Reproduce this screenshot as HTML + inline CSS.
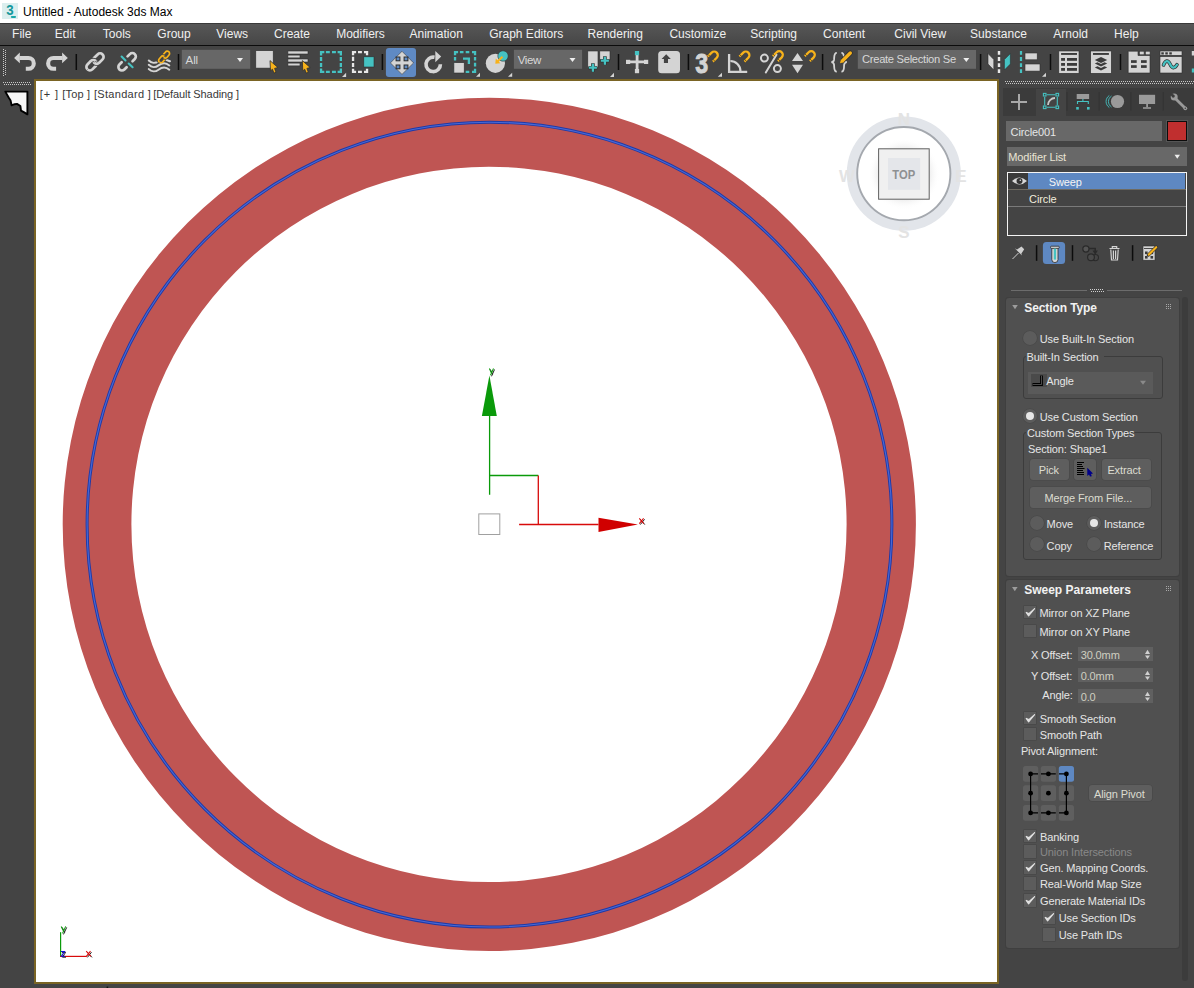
<!DOCTYPE html>
<html><head><meta charset="utf-8">
<style>
*{box-sizing:border-box}
html,body{margin:0;padding:0}
body{width:1194px;height:988px;position:relative;overflow:hidden;background:#444;font-family:"Liberation Sans",sans-serif;}
.a{position:absolute}
.t{position:absolute;white-space:pre;line-height:14px;color:#e6e6e6;font-size:11px}
.m{position:absolute;white-space:pre;line-height:14px;color:#f0f0f0;font-size:12px;top:27px}
</style></head>
<body>
<div class="a" style="left:0;top:0;width:1194px;height:23px;background:#fff"></div>
<div class="a" style="left:0;top:23px;width:1194px;height:1px;background:#3a3a3a"></div>
<svg class="a" style="left:2px;top:3px" width="16" height="16" viewBox="0 0 16 16"><rect x="0" y="0" width="16" height="16" fill="#dbeeee"/><text x="4.3" y="12.1" font-family="Liberation Sans" font-weight="bold" font-size="14.5" fill="#15989c" transform="translate(4.3,0) scale(0.92,1) translate(-4.3,0)">3</text><rect x="8.9" y="12.9" width="5.1" height="2" rx="0.8" fill="#1aa8a8"/></svg>
<div class="t" style="left:23px;top:5px;font-size:12px;color:#000">Untitled - Autodesk 3ds Max</div>
<div class="a" style="left:0;top:24px;width:1194px;height:21px;background:linear-gradient(#575757,#464646)"></div>
<div class="a" style="left:0;top:45px;width:1194px;height:1px;background:#0c0c0c"></div>
<div class="m" style="left:12.1px">File</div>
<div class="m" style="left:54.8px">Edit</div>
<div class="m" style="left:102.8px">Tools</div>
<div class="m" style="left:157.3px">Group</div>
<div class="m" style="left:216.3px">Views</div>
<div class="m" style="left:274.0px">Create</div>
<div class="m" style="left:336.2px">Modifiers</div>
<div class="m" style="left:409.5px">Animation</div>
<div class="m" style="left:489.2px">Graph Editors</div>
<div class="m" style="left:587.6px">Rendering</div>
<div class="m" style="left:669.4px">Customize</div>
<div class="m" style="left:750.3px">Scripting</div>
<div class="m" style="left:823.1px">Content</div>
<div class="m" style="left:894.3px">Civil View</div>
<div class="m" style="left:970.1px">Substance</div>
<div class="m" style="left:1053.3px">Arnold</div>
<div class="m" style="left:1114.1px">Help</div>
<svg class="a" style="left:0;top:0" width="1194" height="80" viewBox="0 0 1194 80"><g fill="#c8c8c8"><rect x="3" y="49" width="1" height="1"/><rect x="3" y="51" width="1" height="1"/><rect x="3" y="53" width="1" height="1"/><rect x="3" y="55" width="1" height="1"/><rect x="3" y="57" width="1" height="1"/><rect x="3" y="59" width="1" height="1"/><rect x="3" y="61" width="1" height="1"/><rect x="3" y="63" width="1" height="1"/><rect x="3" y="65" width="1" height="1"/><rect x="3" y="67" width="1" height="1"/><rect x="3" y="69" width="1" height="1"/><rect x="3" y="71" width="1" height="1"/><rect x="3" y="73" width="1" height="1"/><rect x="3" y="75" width="1" height="1"/><rect x="5" y="50" width="1" height="1"/><rect x="5" y="52" width="1" height="1"/><rect x="5" y="54" width="1" height="1"/><rect x="5" y="56" width="1" height="1"/><rect x="5" y="58" width="1" height="1"/><rect x="5" y="60" width="1" height="1"/><rect x="5" y="62" width="1" height="1"/><rect x="5" y="64" width="1" height="1"/><rect x="5" y="66" width="1" height="1"/><rect x="5" y="68" width="1" height="1"/><rect x="5" y="70" width="1" height="1"/><rect x="5" y="72" width="1" height="1"/><rect x="5" y="74" width="1" height="1"/></g><path d="M19.5,58 H28.4 A5.35 5.35 0 0 1 28.4,68.75 H25.8" fill="none" stroke="#d4d4d4" stroke-width="4.1"/><polygon points="14.1,57.9 19.8,52.6 19.8,63.2" fill="#d4d4d4"/><g transform="translate(81.9,0) scale(-1,1)"><path d="M19.5,58 H28.4 A5.35 5.35 0 0 1 28.4,68.75 H25.8" fill="none" stroke="#d4d4d4" stroke-width="4.1"/><polygon points="14.1,57.9 19.8,52.6 19.8,63.2" fill="#d4d4d4"/></g><rect x="75.55" y="54" width="1.5" height="16" fill="#0c0c0c"/><path d="M-5.9,0 A3.5 3.5 0 0 0 -2.4,3.5 H2.4 A3.5 3.5 0 0 0 5.9,0" transform="translate(91.6,65.2) rotate(-45)" fill="none" stroke="#d4d4d4" stroke-width="2.7"/><path d="M-2.4,-3.5 H2.4 A3.5 3.5 0 0 1 2.4,3.5 H-2.4 A3.5 3.5 0 0 1 -2.4,-3.5 Z" transform="translate(98.4,58.6) rotate(-45)" fill="none" stroke="#444" stroke-width="4.300000000000001"/><path d="M-2.4,-3.5 H2.4 A3.5 3.5 0 0 1 2.4,3.5 H-2.4 A3.5 3.5 0 0 1 -2.4,-3.5 Z" transform="translate(98.4,58.6) rotate(-45)" fill="none" stroke="#d4d4d4" stroke-width="2.7"/><path d="M-5.9,0 A3.5 3.5 0 0 1 -2.4,-3.5 H2.4 A3.5 3.5 0 0 1 5.9,0" transform="translate(91.6,65.2) rotate(-45)" fill="none" stroke="#444" stroke-width="4.300000000000001"/><path d="M-5.9,0 A3.5 3.5 0 0 1 -2.4,-3.5 H2.4 A3.5 3.5 0 0 1 5.9,0" transform="translate(91.6,65.2) rotate(-45)" fill="none" stroke="#d4d4d4" stroke-width="2.7"/><path d="M1.2,-3.5 H-2.0 A3.5 3.5 0 0 0 -2.0,3.5 H1.2" transform="translate(123.3,65.6) rotate(-45)" fill="none" stroke="#d4d4d4" stroke-width="2.7" stroke-linecap="round"/><path d="M-1.2,3.5 H2.0 A3.5 3.5 0 0 0 2.0,-3.5 H-1.2" transform="translate(130.9,58.0) rotate(-45)" fill="none" stroke="#d4d4d4" stroke-width="2.7" stroke-linecap="round"/><path d="M121.6,56.5 L125.5,60.4 M128.7,63.5 L132.6,67.2" stroke="#45c2c2" stroke-width="2.1" stroke-linecap="round"/><path d="M148.8,69.1 C151.5,72.0 155.5,72.0 158.5,69.69999999999999 S165.5,66.3 169.3,69.69999999999999" fill="none" stroke="#d4d4d4" stroke-width="2" stroke-linecap="round"/><path d="M148.8,64.8 C151.5,67.7 155.5,67.7 158.5,65.39999999999999 S165.5,62.0 169.3,65.39999999999999" fill="none" stroke="#d4d4d4" stroke-width="2" stroke-linecap="round"/><path d="M148.8,60.5 C151.5,63.4 155.5,63.4 158.5,61.1 S165.5,57.7 169.3,61.1" fill="none" stroke="#d4d4d4" stroke-width="2" stroke-linecap="round"/><rect x="156" y="49" width="15" height="12.5" fill="#444" transform="rotate(0)"/><path d="M166.5,60 L170,61.2" stroke="#d4d4d4" stroke-width="2" stroke-linecap="round"/><path d="M-3.8,0 A2.3 2.3 0 0 0 -1.5,2.3 H1.5 A2.3 2.3 0 0 0 3.8,0" transform="translate(161.9,59.3) rotate(-50)" fill="none" stroke="#f7b21b" stroke-width="1.7"/><path d="M-1.5,-2.3 H1.5 A2.3 2.3 0 0 1 1.5,2.3 H-1.5 A2.3 2.3 0 0 1 -1.5,-2.3 Z" transform="translate(166.3,54.6) rotate(-50)" fill="none" stroke="#444" stroke-width="3.3"/><path d="M-1.5,-2.3 H1.5 A2.3 2.3 0 0 1 1.5,2.3 H-1.5 A2.3 2.3 0 0 1 -1.5,-2.3 Z" transform="translate(166.3,54.6) rotate(-50)" fill="none" stroke="#f7b21b" stroke-width="1.7"/><path d="M-3.8,0 A2.3 2.3 0 0 1 -1.5,-2.3 H1.5 A2.3 2.3 0 0 1 3.8,0" transform="translate(161.9,59.3) rotate(-50)" fill="none" stroke="#444" stroke-width="3.3"/><path d="M-3.8,0 A2.3 2.3 0 0 1 -1.5,-2.3 H1.5 A2.3 2.3 0 0 1 3.8,0" transform="translate(161.9,59.3) rotate(-50)" fill="none" stroke="#f7b21b" stroke-width="1.7"/><rect x="177.75" y="54" width="1.5" height="16" fill="#0c0c0c"/><rect x="181.8" y="49.8" width="68.4" height="19" fill="#676767"/><polygon points="237,58 243,58 240,62" fill="#eee"/><rect x="255.8" y="50.7" width="17.4" height="17.4" fill="#d4d4d4" stroke="#2e2e2e" stroke-width="0.6"/><polygon points="270.0,60.6 270.5,70.9 272.4,69.2 274.0,73.1 276.0,72.3 274.6,68.4 277.9,67.5" fill="#f7b21b" stroke="#2e2e2e" stroke-width="0.8" stroke-linejoin="round"/><rect x="287.9" y="51" width="20.100000000000023" height="3" fill="#d4d4d4" stroke="#2e2e2e" stroke-width="0.6"/><rect x="287.9" y="55.1" width="12.100000000000023" height="2.799999999999997" fill="#d4d4d4" stroke="#2e2e2e" stroke-width="0.6"/><rect x="287.9" y="59" width="20.100000000000023" height="3" fill="#d4d4d4" stroke="#2e2e2e" stroke-width="0.6"/><rect x="287.9" y="63.1" width="12.100000000000023" height="2.8000000000000043" fill="#d4d4d4" stroke="#2e2e2e" stroke-width="0.6"/><polygon points="302.3,60.6 302.8,70.9 304.7,69.2 306.3,73.1 308.3,72.3 306.9,68.4 310.2,67.5" fill="#f7b21b" stroke="#2e2e2e" stroke-width="0.8" stroke-linejoin="round"/><path d="M321.04999999999995,55.4 V52.15 H324.29999999999995 M337.6,52.15 H340.85 V55.4 M340.85,68.6 V71.85 H337.6 M324.29999999999995,71.85 H321.04999999999995 V68.6 M325.9,52.15 H329.79999999999995 M325.9,71.85 H329.79999999999995 M332.0,52.15 H335.9 M332.0,71.85 H335.9 M321.04999999999995,57.0 V60.9 M340.85,57.0 V60.9 M321.04999999999995,63.1 V67.0 M340.85,63.1 V67.0" fill="none" stroke="#45c2c2" stroke-width="2.3"/><polygon points="346.1,72.8 346.1,77 342,77" fill="#d4d4d4"/><path d="M353.04999999999995,55.199999999999996 V52.15 H356.09999999999997 M364.0,52.15 H367.05 V55.199999999999996 M367.05,68.8 V71.85 H364.0 M356.09999999999997,71.85 H353.04999999999995 V68.8 M358.0,52.15 H361.9 M358.0,71.85 H361.9 M353.04999999999995,56.8 V60.9 M353.04999999999995,62.9 V67.0" fill="none" stroke="#e8e8e8" stroke-width="2.3"/><rect x="363.8" y="56.8" width="10.2" height="10.2" fill="#45c2c2" stroke="#2e2e2e" stroke-width="0.6"/><rect x="381.65" y="54" width="1.5" height="16" fill="#0c0c0c"/><rect x="385.9" y="47.9" width="30.1" height="29.2" rx="3" fill="#5f8ac4"/><polygon points="402,51.3 413.6,62.9 402,74.4 390.4,62.9" fill="#d4d4d4" stroke="#3a3a3a" stroke-width="0.6"/><rect x="396.1" y="57.0" width="3.8" height="3.8" fill="#5f8ac4" stroke="#2a2a2a" stroke-width="1"/><rect x="404.1" y="57.0" width="3.8" height="3.8" fill="#5f8ac4" stroke="#2a2a2a" stroke-width="1"/><rect x="396.1" y="65.0" width="3.8" height="3.8" fill="#5f8ac4" stroke="#2a2a2a" stroke-width="1"/><rect x="404.1" y="65.0" width="3.8" height="3.8" fill="#5f8ac4" stroke="#2a2a2a" stroke-width="1"/><path d="M434.5,57.3 A7.2 7.2 0 1 0 440.4,64.2" fill="none" stroke="#d4d4d4" stroke-width="3.6"/><polygon points="435.3,50.9 441.2,56.6 435.3,62.3" fill="#d4d4d4"/><path d="M455.04999999999995,55.199999999999996 V52.15 H458.09999999999997 M472.0,52.15 H475.05 V55.199999999999996 M475.05,68.8 V71.85 H472.0 M458.09999999999997,71.85 H455.04999999999995 V68.8 M459.9,52.15 H463.5 M459.9,71.85 H463.5 M465.7,52.15 H469.29999999999995 M465.7,71.85 H469.29999999999995 M455.04999999999995,57.0 V60.6 M475.05,57.0 V60.6 M455.04999999999995,62.8 V66.4 M475.05,62.8 V66.4" fill="none" stroke="#45c2c2" stroke-width="2.3"/><path d="M463,58.6 H468.9 V64" fill="none" stroke="#45c2c2" stroke-width="2.3"/><rect x="453.9" y="62.7" width="10.3" height="10.3" fill="#d4d4d4" stroke="#2e2e2e" stroke-width="0.6"/><polygon points="480,72.7 480,76.8 476,76.8" fill="#d4d4d4"/><circle cx="495.4" cy="63.3" r="9.6" fill="#d4d4d4"/><circle cx="503" cy="56" r="5.2" fill="#45c2c2" stroke="#333" stroke-width="0.6"/><path d="M502.5,56.8 L497,62" stroke="#f7b21b" stroke-width="1.9"/><polygon points="495.3,63.8 495.8,58.6 500.3,63.2" fill="#f7b21b"/><polygon points="512.2,72.7 512.2,76.8 508,76.8" fill="#d4d4d4"/><rect x="513.9" y="49.8" width="68.2" height="19" fill="#676767"/><polygon points="569.5,58 575.5,58 572.5,62" fill="#eee"/><rect x="587.8" y="51" width="10.2" height="16.5" fill="#d4d4d4" stroke="#2e2e2e" stroke-width="0.6"/><rect x="599.8" y="51" width="10.2" height="8.8" fill="#d4d4d4" stroke="#2e2e2e" stroke-width="0.6"/><path d="M588.5,67.7 H597.3 M592.9,63.300000000000004 V72.10000000000001" stroke="#303030" stroke-width="3.6"/><path d="M588.9,67.7 H596.9 M592.9,63.7 V71.7" stroke="#45c2c2" stroke-width="2.3"/><path d="M600.5,60.7 H609.3 M604.9,56.300000000000004 V65.10000000000001" stroke="#303030" stroke-width="3.6"/><path d="M600.9,60.7 H608.9 M604.9,56.7 V64.7" stroke="#45c2c2" stroke-width="2.3"/><polygon points="614,72.7 614,76.9 610,76.9" fill="#d4d4d4"/><rect x="617.75" y="54" width="1.5" height="16" fill="#0c0c0c"/><path d="M628,61.9 H646 M637.1,55 V71" stroke="#d4d4d4" stroke-width="2.8"/><rect x="626" y="59.8" width="4.2" height="4.2" fill="#d4d4d4"/><rect x="644" y="59.8" width="4.2" height="4.2" fill="#d4d4d4"/><rect x="634.9" y="69" width="4.2" height="4.2" fill="#d4d4d4"/><rect x="634.9" y="51" width="4.2" height="4.2" fill="#45c2c2"/><rect x="658.2" y="51" width="21.8" height="22.2" rx="3.5" fill="#d4d4d4"/><polygon points="666.2,54.3 670.8,58.9 668,58.9 668,63 663.9,63 663.9,58.9 661.6,58.9" fill="#444"/><rect x="687.65" y="54" width="1.5" height="16" fill="#0c0c0c"/><text x="695.3" y="73" font-family="Liberation Sans" font-weight="bold" font-size="27" fill="#d4d4d4" stroke="#d4d4d4" stroke-width="0.9" transform="translate(695.3,0) scale(0.86,1) translate(-695.3,0)">3</text><g transform="translate(714.2,55.2) rotate(45)"><path d="M-3.6,5.4 V0 A3.6 3.6 0 0 1 3.6,0 V5.4" fill="none" stroke="#f7b21b" stroke-width="2.3"/><path d="M-4.8,3.8000000000000003 H-2.4000000000000004 M2.4000000000000004,3.8000000000000003 H4.8" stroke="#2a2a2a" stroke-width="0.7"/></g><polygon points="722,72.7 722,76.8 717.8,76.8" fill="#d4d4d4"/><path d="M729.1,53.9 V71.9 H747.2" fill="none" stroke="#d4d4d4" stroke-width="2.3"/><path d="M730.4,61 A10 10 0 0 1 740.4,71" fill="none" stroke="#d4d4d4" stroke-width="2.2"/><g transform="translate(745.8000000000001,55.2) rotate(45)"><path d="M-3.6,5.4 V0 A3.6 3.6 0 0 1 3.6,0 V5.4" fill="none" stroke="#f7b21b" stroke-width="2.3"/><path d="M-4.8,3.8000000000000003 H-2.4000000000000004 M2.4000000000000004,3.8000000000000003 H4.8" stroke="#2a2a2a" stroke-width="0.7"/></g><circle cx="764.4" cy="58.1" r="3.5" fill="none" stroke="#d4d4d4" stroke-width="2"/><circle cx="777.4" cy="68.6" r="3.5" fill="none" stroke="#d4d4d4" stroke-width="2"/><path d="M765.8,72.4 L776.5,54.8" stroke="#d4d4d4" stroke-width="2" stroke-linecap="round"/><g transform="translate(779.2,54.800000000000004) rotate(45)"><path d="M-3.6,5.4 V0 A3.6 3.6 0 0 1 3.6,0 V5.4" fill="none" stroke="#f7b21b" stroke-width="2.3"/><path d="M-4.8,3.8000000000000003 H-2.4000000000000004 M2.4000000000000004,3.8000000000000003 H4.8" stroke="#2a2a2a" stroke-width="0.7"/></g><polygon points="797.5,53.1 803,61.1 792,61.1" fill="#d4d4d4"/><polygon points="792,64.8 803,64.8 797.5,73.2" fill="#d4d4d4"/><g transform="translate(811.2,54.800000000000004) rotate(45)"><path d="M-3.6,5.4 V0 A3.6 3.6 0 0 1 3.6,0 V5.4" fill="none" stroke="#f7b21b" stroke-width="2.3"/><path d="M-4.8,3.8000000000000003 H-2.4000000000000004 M2.4000000000000004,3.8000000000000003 H4.8" stroke="#2a2a2a" stroke-width="0.7"/></g><rect x="821.85" y="54" width="1.5" height="16" fill="#0c0c0c"/><path d="M836.8,52.8 C833.5,52.8 834.5,57 834,60 C833.7,61.5 832.5,62.2 831.3,62.2 C832.5,62.2 833.7,63 834,64.5 C834.5,67.5 833.5,71.6 836.8,71.6" fill="none" stroke="#d4d4d4" stroke-width="1.8"/><path d="M841.4,52.8 C844.7,52.8 843.7,57 844.2,60 C844.5,61.5 845.7,62.2 846.9,62.2 C845.7,62.2 844.5,63 844.2,64.5 C843.7,67.5 844.7,71.6 841.4,71.6" fill="none" stroke="#d4d4d4" stroke-width="1.8"/><path d="M850.3,53 L842.6,60.7" stroke="#303030" stroke-width="5" stroke-linecap="round"/><path d="M850.3,53 L842.8,60.5" stroke="#f7b21b" stroke-width="3.4" stroke-linecap="round"/><polygon points="840,63.2 840.9,59.2 844,62.3" fill="#f7b21b"/><rect x="857.8" y="50" width="118.2" height="18.8" fill="#676767"/><polygon points="963.3,58 969.3,58 966.3,62" fill="#eee"/><rect x="979.85" y="54" width="1.5" height="16" fill="#0c0c0c"/><polygon points="988,53.5 993.8,59.5 993.8,70 988,64" fill="#d4d4d4" stroke="#2e2e2e" stroke-width="0.6"/><path d="M999,51 V73.2" stroke="#e8e8e8" stroke-width="2.4" stroke-dasharray="3.8,2.3"/><polygon points="1010.4,53.5 1010.4,64 1004.4,70 1004.4,59.5" fill="#45c2c2" stroke="#2e2e2e" stroke-width="0.6"/><path d="M1021,51 V73.2" stroke="#45c2c2" stroke-width="2.2" stroke-dasharray="3.8,2.3"/><rect x="1025" y="53" width="12.2" height="6.8" fill="#d4d4d4" stroke="#2e2e2e" stroke-width="0.6"/><rect x="1025" y="64" width="15" height="7.1" fill="#d4d4d4" stroke="#2e2e2e" stroke-width="0.6"/><polygon points="1046,72.7 1046,76.8 1042,76.8" fill="#d4d4d4"/><rect x="1049.75" y="54" width="1.5" height="16" fill="#0c0c0c"/><rect x="1058.8" y="51" width="20.2" height="22.3" fill="#d4d4d4" stroke="#2e2e2e" stroke-width="0.6"/><g fill="#3a3a3a"><rect x="1061.1" y="53" width="15.9" height="1.9"/><rect x="1061.1" y="58" width="3.9" height="2.8"/><rect x="1067" y="58" width="10" height="2.8"/><rect x="1061.1" y="63" width="3.9" height="2.8"/><rect x="1067" y="63" width="10" height="2.8"/><rect x="1061.1" y="68" width="3.9" height="2.8"/><rect x="1067" y="68" width="10" height="2.8"/></g><rect x="1090.7" y="51" width="20.6" height="22.3" fill="#d4d4d4" stroke="#2e2e2e" stroke-width="0.6"/><g fill="#3a3a3a"><rect x="1093" y="53" width="15.9" height="1.9"/><polygon points="1101,57 1107.2,60 1101,63 1094.8,60"/><polygon points="1094.8,63.5 1097.5,62.2 1101,64 1104.5,62.2 1107.2,63.5 1101,66.5"/><polygon points="1094.8,67.5 1097.5,66.2 1101,68 1104.5,66.2 1107.2,67.5 1101,70.6"/></g><rect x="1119.75" y="54" width="1.5" height="16" fill="#0c0c0c"/><path d="M1128.2,51.2 H1138 V55.5 H1150 V73 H1128.2 Z" fill="#d4d4d4" stroke="#2e2e2e" stroke-width="0.6"/><rect x="1139.3" y="51.2" width="4.8" height="3.6" fill="#d4d4d4" stroke="#2e2e2e" stroke-width="0.6"/><rect x="1145.3" y="51.2" width="4.8" height="3.6" fill="#d4d4d4" stroke="#2e2e2e" stroke-width="0.6"/><g fill="#3a3a3a"><rect x="1131" y="60.2" width="5.7" height="2.7"/><rect x="1141" y="60.2" width="5.7" height="2.7"/><rect x="1131" y="65.2" width="5.7" height="2.7"/><rect x="1141" y="65.2" width="5.7" height="2.7"/></g><rect x="1160" y="51" width="22" height="4.3" fill="#d4d4d4" stroke="#2e2e2e" stroke-width="0.6"/><rect x="1160" y="56.6" width="22" height="16.4" fill="#d4d4d4" stroke="#2e2e2e" stroke-width="0.6"/><g fill="#3a3a3a"><rect x="1161.3" y="52.3" width="2.5" height="2.2"/><rect x="1165.3" y="52.3" width="2.5" height="2.2"/><rect x="1169.3" y="52.3" width="2.5" height="2.2"/></g><path d="M1163.5,65 C1165.5,60 1168,60 1170,64 C1172,68.5 1174.5,69 1177,64.7" fill="none" stroke="#303030" stroke-width="3.6" stroke-linecap="round"/><path d="M1163.5,65 C1165.5,60 1168,60 1170,64 C1172,68.5 1174.5,69 1177,64.7" fill="none" stroke="#45c2c2" stroke-width="2.2" stroke-linecap="round"/><rect x="1191.8" y="51" width="3" height="4.5" fill="#d4d4d4"/><rect x="1191.8" y="68.5" width="3" height="4" fill="#45c2c2"/></svg>
<div class="t" style="left:185.6px;top:53.0px;font-size:11.5px;color:#d8d8d8;font-weight:normal;letter-spacing:-0.1px;">All</div><div class="t" style="left:517.7px;top:53.0px;font-size:11.5px;color:#d8d8d8;font-weight:normal;letter-spacing:-0.35px;">View</div><div class="t" style="left:862.0px;top:52.2px;font-size:11.2px;color:#d8d8d8;font-weight:normal;letter-spacing:-0.3px;">Create Selection Se</div>
<div class="a" style="left:34px;top:79px;width:965px;height:905px;border:2px solid #7a6424;background:#fff"></div>
<svg class="a" style="left:0;top:0" width="1194" height="988" viewBox="0 0 1194 988"><path d="M62.699999999999974,524.4 A426.6 426.6 0 1 0 915.9,524.4 A426.6 426.6 0 1 0 62.699999999999974,524.4 Z M131.39999999999998,524.4 A357.6 357.6 0 1 1 846.6,524.4 A357.6 357.6 0 1 1 131.39999999999998,524.4 Z" fill="#bf5553" fill-rule="evenodd"/><circle cx="489.0" cy="524.6" r="402.4" fill="none" stroke="#1e3aa8" stroke-width="3" transform="translate(0.5,0)"/><circle cx="489.0" cy="524.6" r="402.4" fill="none" stroke="#4a68d4" stroke-width="1.1" transform="translate(0.5,0)"/><path d="M489.6,416 V494.7 M489.6,475.5 H538.3" stroke="#0a9a0a" stroke-width="1.3" fill="none"/><polygon points="489.4,375.5 496.8,416 481.9,416" fill="#0a9a0a"/><path d="M538.3,475.5 V524.5 M519.1,524.5 H598.5" stroke="#d80a0a" stroke-width="1.3" fill="none"/><polygon points="598.5,517.7 637.9,524.5 598.5,531.9" fill="#d00000"/><rect x="478.8" y="513.9" width="21" height="20.6" fill="none" stroke="#a0a0a0" stroke-width="1"/><path d="M489.4,368.5 L491.6,373.5 M493.5,368.5 L490.5,375.3" transform="translate(1,1)" fill="none" stroke="#222" stroke-width="1"/><path d="M489.4,368.5 L491.6,373.5 M493.5,368.5 L490.5,375.3" fill="none" stroke="#0a9a0a" stroke-width="1.05"/><path d="M639.3,518.3 L643.8,523.6 M643.6,518.3 L639.3,523.6" transform="translate(1,1)" fill="none" stroke="#222" stroke-width="1"/><path d="M639.3,518.3 L643.8,523.6 M643.6,518.3 L639.3,523.6" fill="none" stroke="#d80a0a" stroke-width="1.05"/><path d="M60.6,932.2 V956.6 H86.8" stroke="none" fill="none"/><rect x="60" y="932.2" width="1.2" height="24.6" fill="#0a9a0a"/><rect x="60" y="955.8" width="26.8" height="1.2" fill="#d80a0a"/><path d="M61.2,926.4 L63.7,931.4 M65.7,926.4 L62.5,933.4" transform="translate(1,1)" fill="none" stroke="#222" stroke-width="1"/><path d="M61.2,926.4 L63.7,931.4 M65.7,926.4 L62.5,933.4" fill="none" stroke="#0a9a0a" stroke-width="1.05"/><path d="M86.2,951.2 L91,956.4 M90.5,951.2 L86.4,956.4" transform="translate(1,1)" fill="none" stroke="#222" stroke-width="1"/><path d="M86.2,951.2 L91,956.4 M90.5,951.2 L86.4,956.4" fill="none" stroke="#d80a0a" stroke-width="1.05"/><path d="M61,951.4 H64.6 L61.4,956.2 H65" transform="translate(1,1)" fill="none" stroke="#222" stroke-width="1"/><path d="M61,951.4 H64.6 L61.4,956.2 H65" fill="none" stroke="#1010d8" stroke-width="1.05"/><defs><radialGradient id="sh" cx="0.5" cy="0.5" r="0.5"><stop offset="0.55" stop-color="#d8d8d8"/><stop offset="1" stop-color="#ffffff" stop-opacity="0"/></radialGradient></defs><circle cx="903.8" cy="173.6" r="51.8" fill="none" stroke="#e2e5ea" stroke-width="10.5"/><circle cx="903.8" cy="173.6" r="46.6" fill="#ffffff" stroke="#a4a8ae" stroke-width="1.9"/><rect x="868" y="138" width="72" height="72" fill="url(#sh)"/><rect x="878.6" y="148.8" width="50.6" height="50.4" fill="#f0f0f0" stroke="#606060" stroke-width="1"/><rect x="888" y="158" width="32.2" height="31.8" fill="#e4e6ea"/><text x="903.8" y="179.2" text-anchor="middle" font-family="Liberation Sans" font-weight="bold" font-size="12.5" fill="#8e9092" transform="translate(903.8,0) scale(0.9,1) translate(-903.8,0)">TOP</text><text x="904" y="125.2" text-anchor="middle" font-family="Liberation Sans" font-weight="bold" font-size="17" fill="#e3e3e3">N</text><text x="904" y="238" text-anchor="middle" font-family="Liberation Sans" font-weight="bold" font-size="17" fill="#e3e3e3">S</text><text x="847" y="182" text-anchor="middle" font-family="Liberation Sans" font-weight="bold" font-size="17" fill="#e3e3e3">W</text><text x="960.8" y="182" text-anchor="middle" font-family="Liberation Sans" font-weight="bold" font-size="17" fill="#e3e3e3">E</text><rect x="106.6" y="986.6" width="1.6" height="1.4" fill="#111"/></svg>
<div class="t" style="left:39.8px;top:87px;font-size:11px;color:#383838;letter-spacing:0.9px">[+ ]</div><div class="t" style="left:62.2px;top:87px;font-size:11px;color:#383838;letter-spacing:0.2px">[Top ]</div><div class="t" style="left:94px;top:87px;font-size:11px;color:#383838;letter-spacing:0.3px">[Standard ]</div><div class="t" style="left:153.3px;top:87px;font-size:11px;color:#383838;letter-spacing:-0.1px">[Default Shading ]</div>
<svg class="a" style="left:0;top:0" width="34" height="120" viewBox="0 0 34 120"><g fill="#c8c8c8"><rect x="3" y="82" width="1" height="1"/><rect x="5" y="82" width="1" height="1"/><rect x="7" y="82" width="1" height="1"/><rect x="9" y="82" width="1" height="1"/><rect x="11" y="82" width="1" height="1"/><rect x="13" y="82" width="1" height="1"/><rect x="15" y="82" width="1" height="1"/><rect x="17" y="82" width="1" height="1"/><rect x="19" y="82" width="1" height="1"/><rect x="21" y="82" width="1" height="1"/><rect x="23" y="82" width="1" height="1"/><rect x="25" y="82" width="1" height="1"/><rect x="27" y="82" width="1" height="1"/><rect x="29" y="82" width="1" height="1"/><rect x="4" y="84" width="1" height="1"/><rect x="6" y="84" width="1" height="1"/><rect x="8" y="84" width="1" height="1"/><rect x="10" y="84" width="1" height="1"/><rect x="12" y="84" width="1" height="1"/><rect x="14" y="84" width="1" height="1"/><rect x="16" y="84" width="1" height="1"/><rect x="18" y="84" width="1" height="1"/><rect x="20" y="84" width="1" height="1"/><rect x="22" y="84" width="1" height="1"/><rect x="24" y="84" width="1" height="1"/><rect x="26" y="84" width="1" height="1"/><rect x="28" y="84" width="1" height="1"/><rect x="30" y="84" width="1" height="1"/></g><polygon points="5.3,91.6 27.4,91.6 27.4,114.4 24.2,112.4 21,110.6 20.4,106 17,103.9 14.6,104.2 11.6,105.3 10.6,100.6 8.8,97.7" fill="#f6f6f6" stroke="#000" stroke-width="1.9" stroke-linejoin="round"/></svg>
<svg class="a" style="left:1000px;top:78px" width="194" height="10"><g fill="#c8c8c8"><rect x="5" y="3" width="1" height="1"/><rect x="7" y="3" width="1" height="1"/><rect x="9" y="3" width="1" height="1"/><rect x="11" y="3" width="1" height="1"/><rect x="13" y="3" width="1" height="1"/><rect x="15" y="3" width="1" height="1"/><rect x="17" y="3" width="1" height="1"/><rect x="19" y="3" width="1" height="1"/><rect x="21" y="3" width="1" height="1"/><rect x="23" y="3" width="1" height="1"/><rect x="25" y="3" width="1" height="1"/><rect x="27" y="3" width="1" height="1"/><rect x="29" y="3" width="1" height="1"/><rect x="31" y="3" width="1" height="1"/><rect x="33" y="3" width="1" height="1"/><rect x="35" y="3" width="1" height="1"/><rect x="37" y="3" width="1" height="1"/><rect x="39" y="3" width="1" height="1"/><rect x="41" y="3" width="1" height="1"/><rect x="43" y="3" width="1" height="1"/><rect x="45" y="3" width="1" height="1"/><rect x="47" y="3" width="1" height="1"/><rect x="49" y="3" width="1" height="1"/><rect x="51" y="3" width="1" height="1"/><rect x="53" y="3" width="1" height="1"/><rect x="55" y="3" width="1" height="1"/><rect x="57" y="3" width="1" height="1"/><rect x="59" y="3" width="1" height="1"/><rect x="61" y="3" width="1" height="1"/><rect x="63" y="3" width="1" height="1"/><rect x="65" y="3" width="1" height="1"/><rect x="67" y="3" width="1" height="1"/><rect x="69" y="3" width="1" height="1"/><rect x="71" y="3" width="1" height="1"/><rect x="73" y="3" width="1" height="1"/><rect x="75" y="3" width="1" height="1"/><rect x="77" y="3" width="1" height="1"/><rect x="79" y="3" width="1" height="1"/><rect x="81" y="3" width="1" height="1"/><rect x="83" y="3" width="1" height="1"/><rect x="85" y="3" width="1" height="1"/><rect x="87" y="3" width="1" height="1"/><rect x="89" y="3" width="1" height="1"/><rect x="91" y="3" width="1" height="1"/><rect x="93" y="3" width="1" height="1"/><rect x="95" y="3" width="1" height="1"/><rect x="97" y="3" width="1" height="1"/><rect x="99" y="3" width="1" height="1"/><rect x="101" y="3" width="1" height="1"/><rect x="103" y="3" width="1" height="1"/><rect x="105" y="3" width="1" height="1"/><rect x="107" y="3" width="1" height="1"/><rect x="109" y="3" width="1" height="1"/><rect x="111" y="3" width="1" height="1"/><rect x="113" y="3" width="1" height="1"/><rect x="115" y="3" width="1" height="1"/><rect x="117" y="3" width="1" height="1"/><rect x="119" y="3" width="1" height="1"/><rect x="121" y="3" width="1" height="1"/><rect x="123" y="3" width="1" height="1"/><rect x="125" y="3" width="1" height="1"/><rect x="127" y="3" width="1" height="1"/><rect x="129" y="3" width="1" height="1"/><rect x="131" y="3" width="1" height="1"/><rect x="133" y="3" width="1" height="1"/><rect x="135" y="3" width="1" height="1"/><rect x="137" y="3" width="1" height="1"/><rect x="139" y="3" width="1" height="1"/><rect x="141" y="3" width="1" height="1"/><rect x="143" y="3" width="1" height="1"/><rect x="145" y="3" width="1" height="1"/><rect x="147" y="3" width="1" height="1"/><rect x="149" y="3" width="1" height="1"/><rect x="151" y="3" width="1" height="1"/><rect x="153" y="3" width="1" height="1"/><rect x="155" y="3" width="1" height="1"/><rect x="157" y="3" width="1" height="1"/><rect x="159" y="3" width="1" height="1"/><rect x="161" y="3" width="1" height="1"/><rect x="163" y="3" width="1" height="1"/><rect x="165" y="3" width="1" height="1"/><rect x="167" y="3" width="1" height="1"/><rect x="169" y="3" width="1" height="1"/><rect x="171" y="3" width="1" height="1"/><rect x="173" y="3" width="1" height="1"/><rect x="175" y="3" width="1" height="1"/><rect x="177" y="3" width="1" height="1"/><rect x="179" y="3" width="1" height="1"/><rect x="181" y="3" width="1" height="1"/><rect x="183" y="3" width="1" height="1"/><rect x="185" y="3" width="1" height="1"/><rect x="187" y="3" width="1" height="1"/><rect x="189" y="3" width="1" height="1"/><rect x="191" y="3" width="1" height="1"/><rect x="193" y="3" width="1" height="1"/><rect x="6" y="5" width="1" height="1"/><rect x="8" y="5" width="1" height="1"/><rect x="10" y="5" width="1" height="1"/><rect x="12" y="5" width="1" height="1"/><rect x="14" y="5" width="1" height="1"/><rect x="16" y="5" width="1" height="1"/><rect x="18" y="5" width="1" height="1"/><rect x="20" y="5" width="1" height="1"/><rect x="22" y="5" width="1" height="1"/><rect x="24" y="5" width="1" height="1"/><rect x="26" y="5" width="1" height="1"/><rect x="28" y="5" width="1" height="1"/><rect x="30" y="5" width="1" height="1"/><rect x="32" y="5" width="1" height="1"/><rect x="34" y="5" width="1" height="1"/><rect x="36" y="5" width="1" height="1"/><rect x="38" y="5" width="1" height="1"/><rect x="40" y="5" width="1" height="1"/><rect x="42" y="5" width="1" height="1"/><rect x="44" y="5" width="1" height="1"/><rect x="46" y="5" width="1" height="1"/><rect x="48" y="5" width="1" height="1"/><rect x="50" y="5" width="1" height="1"/><rect x="52" y="5" width="1" height="1"/><rect x="54" y="5" width="1" height="1"/><rect x="56" y="5" width="1" height="1"/><rect x="58" y="5" width="1" height="1"/><rect x="60" y="5" width="1" height="1"/><rect x="62" y="5" width="1" height="1"/><rect x="64" y="5" width="1" height="1"/><rect x="66" y="5" width="1" height="1"/><rect x="68" y="5" width="1" height="1"/><rect x="70" y="5" width="1" height="1"/><rect x="72" y="5" width="1" height="1"/><rect x="74" y="5" width="1" height="1"/><rect x="76" y="5" width="1" height="1"/><rect x="78" y="5" width="1" height="1"/><rect x="80" y="5" width="1" height="1"/><rect x="82" y="5" width="1" height="1"/><rect x="84" y="5" width="1" height="1"/><rect x="86" y="5" width="1" height="1"/><rect x="88" y="5" width="1" height="1"/><rect x="90" y="5" width="1" height="1"/><rect x="92" y="5" width="1" height="1"/><rect x="94" y="5" width="1" height="1"/><rect x="96" y="5" width="1" height="1"/><rect x="98" y="5" width="1" height="1"/><rect x="100" y="5" width="1" height="1"/><rect x="102" y="5" width="1" height="1"/><rect x="104" y="5" width="1" height="1"/><rect x="106" y="5" width="1" height="1"/><rect x="108" y="5" width="1" height="1"/><rect x="110" y="5" width="1" height="1"/><rect x="112" y="5" width="1" height="1"/><rect x="114" y="5" width="1" height="1"/><rect x="116" y="5" width="1" height="1"/><rect x="118" y="5" width="1" height="1"/><rect x="120" y="5" width="1" height="1"/><rect x="122" y="5" width="1" height="1"/><rect x="124" y="5" width="1" height="1"/><rect x="126" y="5" width="1" height="1"/><rect x="128" y="5" width="1" height="1"/><rect x="130" y="5" width="1" height="1"/><rect x="132" y="5" width="1" height="1"/><rect x="134" y="5" width="1" height="1"/><rect x="136" y="5" width="1" height="1"/><rect x="138" y="5" width="1" height="1"/><rect x="140" y="5" width="1" height="1"/><rect x="142" y="5" width="1" height="1"/><rect x="144" y="5" width="1" height="1"/><rect x="146" y="5" width="1" height="1"/><rect x="148" y="5" width="1" height="1"/><rect x="150" y="5" width="1" height="1"/><rect x="152" y="5" width="1" height="1"/><rect x="154" y="5" width="1" height="1"/><rect x="156" y="5" width="1" height="1"/><rect x="158" y="5" width="1" height="1"/><rect x="160" y="5" width="1" height="1"/><rect x="162" y="5" width="1" height="1"/><rect x="164" y="5" width="1" height="1"/><rect x="166" y="5" width="1" height="1"/><rect x="168" y="5" width="1" height="1"/><rect x="170" y="5" width="1" height="1"/><rect x="172" y="5" width="1" height="1"/><rect x="174" y="5" width="1" height="1"/><rect x="176" y="5" width="1" height="1"/><rect x="178" y="5" width="1" height="1"/><rect x="180" y="5" width="1" height="1"/><rect x="182" y="5" width="1" height="1"/><rect x="184" y="5" width="1" height="1"/><rect x="186" y="5" width="1" height="1"/><rect x="188" y="5" width="1" height="1"/><rect x="190" y="5" width="1" height="1"/><rect x="192" y="5" width="1" height="1"/></g></svg><div class="a" style="left:1003px;top:88px;width:191px;height:28px;background:#3b3b3b"></div><div class="a" style="left:1036px;top:89px;width:30px;height:27px;background:#444"></div><svg class="a" style="left:0;top:0" width="1194" height="120" viewBox="0 0 1194 120"><path d="M1011,102 H1027 M1019,94 V110" stroke="#a8a8a8" stroke-width="2"/><g fill="none" stroke="#45c2c2" stroke-width="1.1"><rect x="1043.4" y="93.4" width="2.6" height="2.6"/><rect x="1056" y="93.4" width="2.6" height="2.6"/><rect x="1043.4" y="106" width="2.6" height="2.6"/><rect x="1056" y="106" width="2.6" height="2.6"/></g><path d="M1046.8,94.7 H1055.4 M1046.8,107.3 H1055.4 M1044.7,97 V105.2 M1057.3,97 V105.2" stroke="#45c2c2" stroke-width="1.1"/><path d="M1048,105 A7 7 0 0 1 1055,98" fill="none" stroke="#c8c8c8" stroke-width="1.8"/><rect x="1076.7" y="94" width="12.4" height="5" fill="#9a9a9a"/><path d="M1082.9,99 V101.5 M1077.5,104 V101.5 H1088.3 V104" fill="none" stroke="#45c2c2" stroke-width="1.1"/><rect x="1076.2" y="107" width="2.6" height="2.6" fill="#45c2c2"/><rect x="1087" y="107" width="2.6" height="2.6" fill="#45c2c2"/><rect x="1066.5" y="92" width="1" height="18.7" fill="#333"/><rect x="1098.6" y="92" width="1" height="18.7" fill="#333"/><rect x="1130.4" y="92" width="1" height="18.7" fill="#333"/><rect x="1162.7" y="92" width="1" height="18.7" fill="#333"/><path d="M1111.5,96 A6.5 6.5 0 0 0 1111.5,107 M1109.3,95.5 A7.2 7.2 0 0 0 1109.3,107.5" fill="none" stroke="#45c2c2" stroke-width="0.9"/><circle cx="1117.5" cy="101.5" r="6.6" fill="#9a9a9a"/><rect x="1139" y="94.8" width="16.1" height="9.2" fill="#9a9a9a"/><rect x="1146.2" y="104" width="1.8" height="3.2" fill="#9a9a9a"/><rect x="1143" y="107.2" width="8" height="1.6" fill="#9a9a9a"/><path d="M1175.6,98.8 L1185.3,108.2" stroke="#9a9a9a" stroke-width="2.8" stroke-linecap="round"/><circle cx="1174.2" cy="97.1" r="3.5" fill="#9a9a9a"/><circle cx="1173.2" cy="96.1" r="1.6" fill="#3b3b3b"/><path d="M1173.2,96.1 L1171,93.9" stroke="#3b3b3b" stroke-width="2.2"/><circle cx="1185.3" cy="108.3" r="1.9" fill="#9a9a9a"/><circle cx="1185.3" cy="108.3" r="0.7" fill="#3b3b3b"/></svg><div class="a" style="left:1006px;top:121px;width:156.3px;height:20px;background:#686868"></div><div class="t" style="left:1010.6px;top:125.0px;font-size:11px;color:#e6e6e6;font-weight:normal;letter-spacing:-0.12px;">Circle001</div><div class="a" style="left:1166px;top:120.3px;width:21.6px;height:21.3px;background:#555"></div><div class="a" style="left:1166.9px;top:121.1px;width:20.1px;height:19.8px;background:#0c0c0c"></div><div class="a" style="left:1168.1px;top:122.3px;width:17.7px;height:17.4px;background:#c02f2f"></div><div class="a" style="left:1007px;top:147px;width:180px;height:19px;background:#686868"></div><div class="t" style="left:1008.3px;top:150.2px;font-size:11px;color:#e8e4d4;font-weight:normal;letter-spacing:-0.12px;">Modifier List</div><svg class="a" style="left:1170px;top:150px" width="14" height="12"><polygon points="4.5,4.7 10,4.7 7.25,8.7" fill="#eee"/></svg><div class="a" style="left:1006.5px;top:171.5px;width:180.4px;height:64px;border:1.6px solid #f4f4f4;background:#444"></div><div class="a" style="left:1008px;top:173px;width:20px;height:16.4px;background:#3a3a3a"></div><div class="a" style="left:1028px;top:173px;width:157.4px;height:16.4px;background:#5e88c2"></div><div class="a" style="left:1008px;top:189.4px;width:178px;height:1px;background:#6e6a60"></div><div class="a" style="left:1008px;top:206px;width:178px;height:1px;background:#7a7a7a"></div><svg class="a" style="left:1011px;top:175px" width="18" height="12"><path d="M1,6 Q8.5,-1 16,6 Q8.5,13 1,6Z" fill="#d8d8d8"/><circle cx="8.5" cy="6" r="3" fill="#333"/><circle cx="9.3" cy="5.2" r="0.8" fill="#ddd"/></svg><div class="t" style="left:1048.8px;top:175.2px;font-size:11px;color:#f4f4f4;font-weight:normal;letter-spacing:-0.12px;">Sweep</div><div class="t" style="left:1029.1px;top:191.9px;font-size:11px;color:#f0ecdc;font-weight:normal;letter-spacing:-0.12px;">Circle</div><svg class="a" style="left:0;top:0" width="1194" height="300" viewBox="0 0 1194 300"><path d="M1012.5,259 L1018.5,253" stroke="#cfcfcf" stroke-width="1"/><polygon points="1017,249.5 1021.5,246.6 1024.2,249.3 1021.3,253.8 1022,255.5 1014.8,248.3" fill="#d0d0d0"/><rect x="1035.85" y="245.2" width="1.5" height="15.600000000000023" fill="#0c0c0c"/><rect x="1042.9" y="241.9" width="22.2" height="22.2" rx="3.5" fill="#5e88c2"/><path d="M1051.8,248 V259.5 A2 2 0 0 0 1058,259.5 V248" fill="#d8d8d8" stroke="#2a2a2a" stroke-width="0.8"/><rect x="1050.6" y="246.2" width="8.6" height="2.2" rx="0.8" fill="#d8d8d8" stroke="#2a2a2a" stroke-width="0.8"/><rect x="1053.8" y="248.6" width="2.3" height="11" fill="#45c2c2"/><rect x="1071.75" y="245.2" width="1.5" height="15.600000000000023" fill="#0c0c0c"/><circle cx="1085.9" cy="249" r="3.1" fill="#555" stroke="#2a2a2a" stroke-width="1.2"/><path d="M1089,248.6 H1095.2 V251" fill="none" stroke="#2a2a2a" stroke-width="1.5"/><polygon points="1092.5,250.6 1097.9,250.6 1095.2,254.7" fill="#2a2a2a"/><circle cx="1095.4" cy="257.6" r="3.1" fill="#454545" stroke="#2a2a2a" stroke-width="1.1"/><circle cx="1091" cy="257.2" r="3.4" fill="#4a4a4a" stroke="#2a2a2a" stroke-width="1.2"/><g fill="none" stroke="#d4d4d4" stroke-width="1.2"><path d="M1109.5,248.5 H1119.5 M1112.3,248.3 V246.6 H1116.7 V248.3"/><path d="M1110.8,249.5 L1111.5,260 H1117.5 L1118.2,249.5 M1113.4,250.5 V259 M1115.6,250.5 V259"/></g><rect x="1131.85" y="245.2" width="1.5" height="15.600000000000023" fill="#0c0c0c"/><rect x="1143" y="246" width="12" height="14.2" fill="#d4d4d4" stroke="#2c2c2c" stroke-width="0.6"/><g fill="#3a3a3a"><rect x="1145" y="251.5" width="2.6" height="2.6"/><rect x="1150.5" y="251.5" width="2.6" height="2.6"/><rect x="1145" y="256" width="2.6" height="2.6"/><rect x="1150.5" y="256" width="2.6" height="2.6"/><rect x="1144" y="248" width="10" height="0.9"/></g><path d="M1156.2,247.2 L1148.5,254.9" stroke="#2c2c2c" stroke-width="3.4" stroke-linecap="round"/><path d="M1156.2,247.2 L1148.8,254.6" stroke="#f7b21b" stroke-width="2.2" stroke-linecap="round"/><rect x="1011" y="290" width="76" height="1" fill="#6c6c6c"/><rect x="1107" y="290" width="75" height="1" fill="#6c6c6c"/><g fill="#d0d0d0"><rect x="1090" y="289" width="1" height="1"/><rect x="1092" y="289" width="1" height="1"/><rect x="1094" y="289" width="1" height="1"/><rect x="1096" y="289" width="1" height="1"/><rect x="1098" y="289" width="1" height="1"/><rect x="1100" y="289" width="1" height="1"/><rect x="1102" y="289" width="1" height="1"/><rect x="1091" y="291" width="1" height="1"/><rect x="1093" y="291" width="1" height="1"/><rect x="1095" y="291" width="1" height="1"/><rect x="1097" y="291" width="1" height="1"/><rect x="1099" y="291" width="1" height="1"/><rect x="1101" y="291" width="1" height="1"/><rect x="1103" y="291" width="1" height="1"/></g></svg>
<div class="a" style="left:1006px;top:298px;width:173px;height:278px;background:#505050;border-radius:3px;box-shadow:0 0 0 1px #3f3f3f"></div><div class="a" style="left:1006px;top:580px;width:173px;height:368.3px;background:#505050;border-radius:3px;box-shadow:0 0 0 1px #3f3f3f"></div><div class="a" style="left:1182px;top:297px;width:6px;height:684px;background:#3c3c3c;border-radius:3px"></div><svg class="a" style="left:0;top:0" width="1194" height="988" viewBox="0 0 1194 988"><polygon points="1012.2,305 1017.8,305 1015,309.2" fill="#9c9c9c"/><polygon points="1012,587 1017.6,587 1014.8,591.2" fill="#9c9c9c"/><g fill="#a8a8a8"><rect x="1166" y="304" width="1" height="1"/><rect x="1166" y="306" width="1" height="1"/><rect x="1166" y="308" width="1" height="1"/><rect x="1168" y="304" width="1" height="1"/><rect x="1168" y="306" width="1" height="1"/><rect x="1168" y="308" width="1" height="1"/><rect x="1170" y="304" width="1" height="1"/><rect x="1170" y="306" width="1" height="1"/><rect x="1170" y="308" width="1" height="1"/><rect x="1166" y="586" width="1" height="1"/><rect x="1166" y="588" width="1" height="1"/><rect x="1166" y="590" width="1" height="1"/><rect x="1168" y="586" width="1" height="1"/><rect x="1168" y="588" width="1" height="1"/><rect x="1168" y="590" width="1" height="1"/><rect x="1170" y="586" width="1" height="1"/><rect x="1170" y="588" width="1" height="1"/><rect x="1170" y="590" width="1" height="1"/></g></svg><div class="t" style="left:1024.3px;top:300.8px;font-size:12px;color:#f2f2f2;font-weight:bold;letter-spacing:-0.1px;">Section Type</div><div class="t" style="left:1024.2px;top:583.0px;font-size:12px;color:#f2f2f2;font-weight:bold;letter-spacing:0px;">Sweep Parameters</div><div class="a" style="left:1022.8px;top:330.8px;width:14.4px;height:14.4px;border-radius:50%;background:#5c5c5c;box-shadow:0 0 0 0.6px #474747"></div><div class="t" style="left:1039.7px;top:332.0px;font-size:11px;color:#e6e6e6;font-weight:normal;letter-spacing:-0.12px;">Use Built-In Section</div><div class="a" style="left:1022.8px;top:356px;width:140.0px;height:43px;border:1.2px solid #3c3c3c;border-radius:3px"></div><div class="a" style="left:1025.8px;top:354px;width:78.20000000000005px;height:5px;background:#505050"></div><div class="t" style="left:1026.5px;top:350.2px;font-size:11px;color:#e6e6e6;font-weight:normal;letter-spacing:-0.12px;">Built-In Section</div><div class="a" style="left:1028.3px;top:372px;width:125px;height:22.4px;background:#5a5a5a"></div><div class="a" style="left:1031.4px;top:374px;width:15.2px;height:12.8px;background:#4a4a4a"></div><svg class="a" style="left:1031px;top:374px" width="16" height="14"><path d="M1.5,10.5 H10.5 V1.5" fill="none" stroke="#000" stroke-width="2.8"/><path d="M1.8,10.5 H10.5 V1.8" fill="none" stroke="#6a6a6a" stroke-width="0.7"/></svg><div class="t" style="left:1046.2px;top:374.0px;font-size:11px;color:#e6e6e6;font-weight:normal;letter-spacing:-0.12px;">Angle</div><svg class="a" style="left:1138px;top:378px" width="10" height="8"><polygon points="2,2.7 8,2.7 5,6.8" fill="#8a8a8a"/></svg><div class="a" style="left:1022.8px;top:408.8px;width:14.4px;height:14.4px;border-radius:50%;background:#5c5c5c;box-shadow:0 0 0 0.6px #474747"></div><div class="a" style="left:1025.7px;top:411.7px;width:8.6px;height:8.6px;border-radius:50%;background:#e6e6e6"></div><div class="t" style="left:1039.7px;top:409.9px;font-size:11px;color:#e6e6e6;font-weight:normal;letter-spacing:-0.12px;">Use Custom Section</div><div class="a" style="left:1022.8px;top:432.4px;width:139.5px;height:127.80000000000007px;border:1.2px solid #3c3c3c;border-radius:3px"></div><div class="a" style="left:1025.8px;top:430.4px;width:86.20000000000005px;height:5px;background:#505050"></div><div class="t" style="left:1027.0px;top:425.6px;font-size:11px;color:#e6e6e6;font-weight:normal;letter-spacing:-0.12px;">Custom Section Types</div><div class="t" style="left:1028.0px;top:441.8px;font-size:11px;color:#e6e6e6;font-weight:normal;letter-spacing:-0.12px;">Section: Shape1</div><div class="a" style="left:1029.9px;top:459.2px;width:39.09999999999991px;height:20.80000000000001px;background:#5e5e5e;border-radius:3px;box-shadow:0 0 0 0.6px #474747"></div><div class="a" style="left:1073.9px;top:459.2px;width:22.09999999999991px;height:20.80000000000001px;background:#5e5e5e;border-radius:3px;box-shadow:0 0 0 0.6px #474747"></div><div class="a" style="left:1102.1px;top:459.2px;width:48.80000000000018px;height:20.80000000000001px;background:#5e5e5e;border-radius:3px;box-shadow:0 0 0 0.6px #474747"></div><div class="t" style="left:1038.7px;top:463.1px;font-size:11px;color:#dcdcd0;font-weight:normal;letter-spacing:-0.12px;">Pick</div><div class="t" style="left:1107.4px;top:463.1px;font-size:11px;color:#dcdcd0;font-weight:normal;letter-spacing:-0.12px;">Extract</div><svg class="a" style="left:1074px;top:459px" width="22" height="21"><g fill="#000"><rect x="3" y="3" width="7" height="1"/><rect x="3" y="5" width="5" height="1"/><rect x="3" y="7" width="6" height="1"/><rect x="3" y="9" width="7.5" height="1"/><rect x="3" y="11" width="6" height="1"/><rect x="3" y="13" width="7" height="1"/><rect x="3" y="15" width="7" height="1"/></g><polygon points="13.3,8.8 13.3,17 15,15.4 16,17.5 17.8,17.3 17,14.9 19,14.6" fill="#00008a"/></svg><div class="a" style="left:1029.8px;top:486.7px;width:121.29999999999995px;height:21.30000000000001px;background:#5e5e5e;border-radius:3px;box-shadow:0 0 0 0.6px #474747"></div><div class="t" style="left:1044.4px;top:491.3px;font-size:11px;color:#dcdcd0;font-weight:normal;letter-spacing:-0.12px;">Merge From File...</div><div class="a" style="left:1029.8px;top:515.5999999999999px;width:14.4px;height:14.4px;border-radius:50%;background:#5c5c5c;box-shadow:0 0 0 0.6px #474747"></div><div class="t" style="left:1046.6px;top:517.2px;font-size:11px;color:#e6e6e6;font-weight:normal;letter-spacing:-0.12px;">Move</div><div class="a" style="left:1086.8px;top:515.5999999999999px;width:14.4px;height:14.4px;border-radius:50%;background:#5c5c5c;box-shadow:0 0 0 0.6px #474747"></div><div class="a" style="left:1089.7px;top:518.5px;width:8.6px;height:8.6px;border-radius:50%;background:#e6e6e6"></div><div class="t" style="left:1103.9px;top:517.2px;font-size:11px;color:#e6e6e6;font-weight:normal;letter-spacing:-0.12px;">Instance</div><div class="a" style="left:1029.8px;top:536.5999999999999px;width:14.4px;height:14.4px;border-radius:50%;background:#5c5c5c;box-shadow:0 0 0 0.6px #474747"></div><div class="t" style="left:1046.6px;top:538.5px;font-size:11px;color:#e6e6e6;font-weight:normal;letter-spacing:-0.12px;">Copy</div><div class="a" style="left:1086.8px;top:536.5999999999999px;width:14.4px;height:14.4px;border-radius:50%;background:#5c5c5c;box-shadow:0 0 0 0.6px #474747"></div><div class="t" style="left:1103.7px;top:538.5px;font-size:11px;color:#e6e6e6;font-weight:normal;letter-spacing:-0.12px;">Reference</div><div class="a" style="left:1023.6px;top:605.8px;width:12.5px;height:12.5px;background:#5c5c5c;box-shadow:0 0 0 0.6px #464646"></div><svg class="a" style="left:1023.6px;top:605.8px" width="12.5" height="12.5"><path d="M2.2,6.4 L4.6,9.9 L10.6,2.6 L4.9,7.6 Z" fill="#e0e0e0" stroke="#e0e0e0" stroke-width="1.1" stroke-linejoin="round"/></svg><div class="t" style="left:1039.5px;top:605.9px;font-size:11px;color:#e6e6e6;font-weight:normal;letter-spacing:-0.12px;">Mirror on XZ Plane</div><div class="a" style="left:1023.6px;top:624.8px;width:12.5px;height:12.5px;background:#5c5c5c;box-shadow:0 0 0 0.6px #464646"></div><div class="t" style="left:1039.5px;top:624.8px;font-size:11px;color:#e6e6e6;font-weight:normal;letter-spacing:-0.12px;">Mirror on XY Plane</div><div class="t" style="left:1030.9px;top:647.7px;font-size:11px;color:#e6e6e6;font-weight:normal;letter-spacing:-0.12px;">X Offset:</div><div class="a" style="left:1078.1px;top:647px;width:74.8px;height:14px;background:#606060"></div><svg class="a" style="left:1144px;top:647px" width="8" height="14"><polygon points="3.5,2.8 6,7 1,7" fill="#d0d0d0"/><polygon points="1,8.4 6,8.4 3.5,11.9" fill="#d0d0d0"/></svg><div class="t" style="left:1080.7px;top:647.8px;font-size:11px;color:#cfcfc0;font-weight:normal;letter-spacing:-0.12px;">30.0mm</div><div class="t" style="left:1030.9px;top:668.5px;font-size:11px;color:#e6e6e6;font-weight:normal;letter-spacing:-0.12px;">Y Offset:</div><div class="a" style="left:1078.1px;top:668.1px;width:74.8px;height:14px;background:#606060"></div><svg class="a" style="left:1144px;top:668.1px" width="8" height="14"><polygon points="3.5,2.8 6,7 1,7" fill="#d0d0d0"/><polygon points="1,8.4 6,8.4 3.5,11.9" fill="#d0d0d0"/></svg><div class="t" style="left:1080.7px;top:668.9px;font-size:11px;color:#cfcfc0;font-weight:normal;letter-spacing:-0.12px;">0.0mm</div><div class="t" style="left:1042.3px;top:688.4px;font-size:11px;color:#e6e6e6;font-weight:normal;letter-spacing:-0.12px;">Angle:</div><div class="a" style="left:1078.1px;top:689.2px;width:74.8px;height:14px;background:#606060"></div><svg class="a" style="left:1144px;top:689.2px" width="8" height="14"><polygon points="3.5,2.8 6,7 1,7" fill="#d0d0d0"/><polygon points="1,8.4 6,8.4 3.5,11.9" fill="#d0d0d0"/></svg><div class="t" style="left:1080.7px;top:690.0px;font-size:11px;color:#cfcfc0;font-weight:normal;letter-spacing:-0.12px;">0.0</div><div class="a" style="left:1023.7px;top:711.8px;width:12.5px;height:12.5px;background:#5c5c5c;box-shadow:0 0 0 0.6px #464646"></div><svg class="a" style="left:1023.7px;top:711.8px" width="12.5" height="12.5"><path d="M2.2,6.4 L4.6,9.9 L10.6,2.6 L4.9,7.6 Z" fill="#e0e0e0" stroke="#e0e0e0" stroke-width="1.1" stroke-linejoin="round"/></svg><div class="t" style="left:1039.7px;top:712.2px;font-size:11px;color:#e6e6e6;font-weight:normal;letter-spacing:-0.12px;">Smooth Section</div><div class="a" style="left:1023.7px;top:727.6px;width:12.5px;height:12.5px;background:#5c5c5c;box-shadow:0 0 0 0.6px #464646"></div><div class="t" style="left:1039.7px;top:728.0px;font-size:11px;color:#e6e6e6;font-weight:normal;letter-spacing:-0.12px;">Smooth Path</div><div class="t" style="left:1020.9px;top:743.8px;font-size:11px;color:#e6e6e6;font-weight:normal;letter-spacing:-0.12px;">Pivot Alignment:</div><svg class="a" style="left:0;top:0" width="1194" height="988" viewBox="0 0 1194 988"><rect x="1023" y="766" width="15.2" height="15.8" rx="2.5" fill="#5f5f5f"/><rect x="1040.8" y="766" width="15.2" height="15.8" rx="2.5" fill="#5f5f5f"/><rect x="1058.8" y="766" width="15.2" height="15.8" rx="2.5" fill="#5e88c2"/><rect x="1023" y="785.3" width="15.2" height="15.8" rx="2.5" fill="#5f5f5f"/><rect x="1040.8" y="785.3" width="15.2" height="15.8" rx="2.5" fill="#5f5f5f"/><rect x="1058.8" y="785.3" width="15.2" height="15.8" rx="2.5" fill="#5f5f5f"/><rect x="1023" y="805" width="15.2" height="15.8" rx="2.5" fill="#5f5f5f"/><rect x="1040.8" y="805" width="15.2" height="15.8" rx="2.5" fill="#5f5f5f"/><rect x="1058.8" y="805" width="15.2" height="15.8" rx="2.5" fill="#5f5f5f"/><path d="M1030.6,773.9 V812.9 M1066.3999999999999,773.9 V812.9 M1030.6,773.9 H1038.0 M1040.9999999999998,773.9 H1055.8 M1058.9999999999998,773.9 H1066.3999999999999 M1030.6,812.9 H1038.0 M1040.9999999999998,812.9 H1055.8 M1058.9999999999998,812.9 H1066.3999999999999" stroke="#000" stroke-width="1.2" fill="none"/><circle cx="1030.6" cy="773.9" r="2.4" fill="#000"/><circle cx="1048.3999999999999" cy="773.9" r="2.4" fill="#000"/><circle cx="1066.3999999999999" cy="773.9" r="2.4" fill="#000"/><circle cx="1030.6" cy="793.1999999999999" r="2.4" fill="#000"/><circle cx="1048.3999999999999" cy="793.1999999999999" r="2.4" fill="#000"/><circle cx="1066.3999999999999" cy="793.1999999999999" r="2.4" fill="#000"/><circle cx="1030.6" cy="812.9" r="2.4" fill="#000"/><circle cx="1048.3999999999999" cy="812.9" r="2.4" fill="#000"/><circle cx="1066.3999999999999" cy="812.9" r="2.4" fill="#000"/></svg><div class="a" style="left:1089px;top:785px;width:63.09999999999991px;height:16px;background:#5e5e5e;border-radius:3px;box-shadow:0 0 0 0.6px #474747"></div><div class="t" style="left:1094.0px;top:787.4px;font-size:11px;color:#dcdcd0;font-weight:normal;letter-spacing:-0.12px;">Align Pivot</div><div class="a" style="left:1023.8px;top:829.9px;width:12.5px;height:12.5px;background:#5c5c5c;box-shadow:0 0 0 0.6px #464646"></div><svg class="a" style="left:1023.8px;top:829.9px" width="12.5" height="12.5"><path d="M2.2,6.4 L4.6,9.9 L10.6,2.6 L4.9,7.6 Z" fill="#e0e0e0" stroke="#e0e0e0" stroke-width="1.1" stroke-linejoin="round"/></svg><div class="t" style="left:1040.0px;top:830.2px;font-size:11px;color:#e6e6e6;font-weight:normal;letter-spacing:-0.12px;">Banking</div><div class="a" style="left:1023.8px;top:845.2px;width:12.5px;height:12.5px;background:#5c5c5c;box-shadow:0 0 0 0.6px #464646"></div><div class="t" style="left:1040.0px;top:844.6px;font-size:11px;color:#888888;font-weight:normal;letter-spacing:-0.12px;">Union Intersections</div><div class="a" style="left:1023.8px;top:861px;width:12.5px;height:12.5px;background:#5c5c5c;box-shadow:0 0 0 0.6px #464646"></div><svg class="a" style="left:1023.8px;top:861px" width="12.5" height="12.5"><path d="M2.2,6.4 L4.6,9.9 L10.6,2.6 L4.9,7.6 Z" fill="#e0e0e0" stroke="#e0e0e0" stroke-width="1.1" stroke-linejoin="round"/></svg><div class="t" style="left:1040.0px;top:860.9px;font-size:11px;color:#e6e6e6;font-weight:normal;letter-spacing:-0.12px;">Gen. Mapping Coords.</div><div class="a" style="left:1023.8px;top:877px;width:12.5px;height:12.5px;background:#5c5c5c;box-shadow:0 0 0 0.6px #464646"></div><div class="t" style="left:1040.0px;top:876.9px;font-size:11px;color:#e6e6e6;font-weight:normal;letter-spacing:-0.12px;">Real-World Map Size</div><div class="a" style="left:1023.8px;top:894px;width:12.5px;height:12.5px;background:#5c5c5c;box-shadow:0 0 0 0.6px #464646"></div><svg class="a" style="left:1023.8px;top:894px" width="12.5" height="12.5"><path d="M2.2,6.4 L4.6,9.9 L10.6,2.6 L4.9,7.6 Z" fill="#e0e0e0" stroke="#e0e0e0" stroke-width="1.1" stroke-linejoin="round"/></svg><div class="t" style="left:1040.0px;top:893.5px;font-size:11px;color:#e6e6e6;font-weight:normal;letter-spacing:-0.12px;">Generate Material IDs</div><div class="a" style="left:1042.8px;top:911px;width:12.5px;height:12.5px;background:#5c5c5c;box-shadow:0 0 0 0.6px #464646"></div><svg class="a" style="left:1042.8px;top:911px" width="12.5" height="12.5"><path d="M2.2,6.4 L4.6,9.9 L10.6,2.6 L4.9,7.6 Z" fill="#e0e0e0" stroke="#e0e0e0" stroke-width="1.1" stroke-linejoin="round"/></svg><div class="t" style="left:1058.7px;top:910.5px;font-size:11px;color:#e6e6e6;font-weight:normal;letter-spacing:-0.12px;">Use Section IDs</div><div class="a" style="left:1042.8px;top:928px;width:12.5px;height:12.5px;background:#5c5c5c;box-shadow:0 0 0 0.6px #464646"></div><div class="t" style="left:1058.7px;top:927.5px;font-size:11px;color:#e6e6e6;font-weight:normal;letter-spacing:-0.12px;">Use Path IDs</div>
</body></html>
